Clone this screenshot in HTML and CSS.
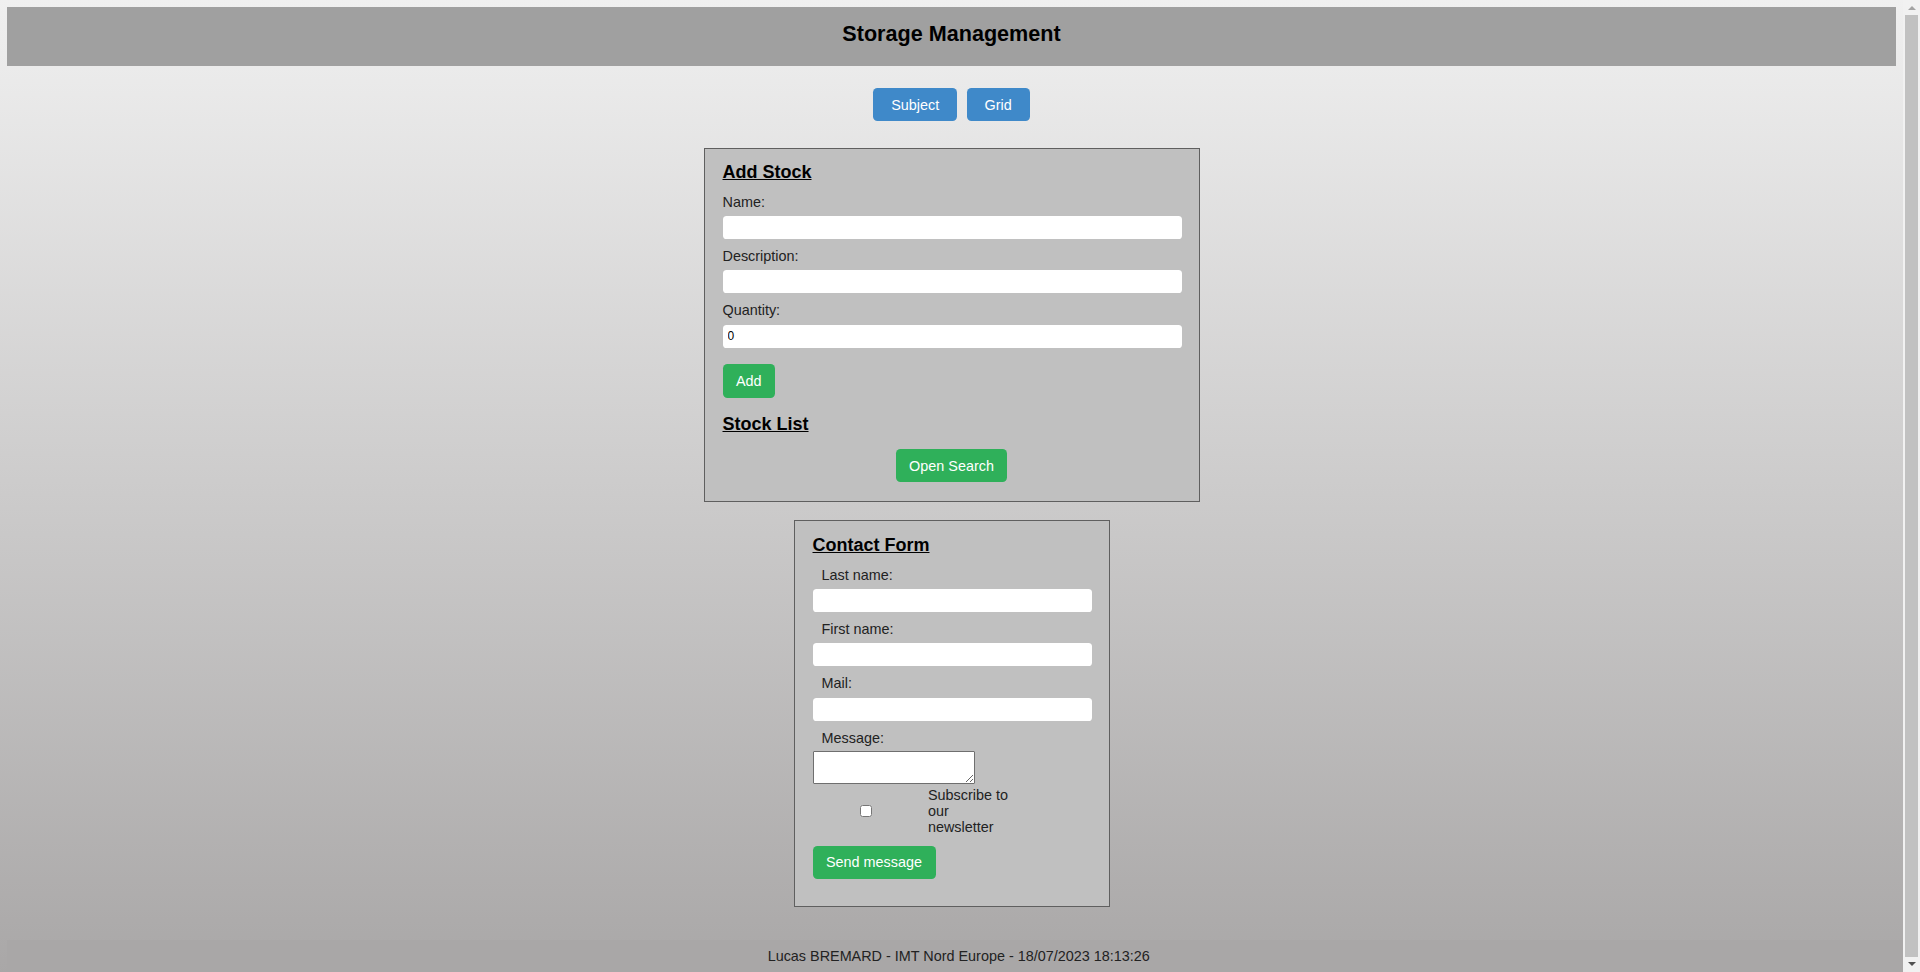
FILE: index.html
```html
<!DOCTYPE html>
<html lang="en">

<head>
    <meta charset="UTF-8">
    <meta name="viewport" content="width=device-width, initial-scale=1.0">
    <title>Storage Management</title>
    <link rel="stylesheet" href="styles.css">
</head>

<body>
    <header class="header">
        <h1>Storage Management</h1>
    </header>

    <nav class="nav">
        <button class="nav-btn">Subject</button>
        <button class="nav-btn">Grid</button>
    </nav>

    <section class="panel stock-panel">
        <h2 class="panel-title">Add Stock</h2>
        <div class="field">
            <label for="name">Name:</label>
            <input type="text" id="name">
        </div>
        <div class="field">
            <label for="description">Description:</label>
            <input type="text" id="description">
        </div>
        <div class="field">
            <label for="quantity">Quantity:</label>
            <input type="number" id="quantity" value="0">
        </div>
        <button class="btn btn-add">Add</button>

        <h2 class="panel-title list-title">Stock List</h2>
        <div class="search-row">
            <button class="btn">Open Search</button>
        </div>
    </section>

    <section class="panel contact-panel">
        <h2 class="panel-title">Contact Form</h2>
        <div class="field">
            <label for="lastname">Last name:</label>
            <input type="text" id="lastname">
        </div>
        <div class="field">
            <label for="firstname">First name:</label>
            <input type="text" id="firstname">
        </div>
        <div class="field">
            <label for="mail">Mail:</label>
            <input type="email" id="mail">
        </div>
        <div class="field message-field">
            <label for="message">Message:</label>
            <textarea id="message"></textarea>
        </div>
        <div class="newsletter">
            <div class="check-cell"><input type="checkbox" id="newsletter"></div>
            <label for="newsletter">Subscribe to our newsletter</label>
        </div>
        <button class="btn btn-send">Send message</button>
    </section>

    <footer class="footer">Lucas BREMARD - IMT Nord Europe - 18/07/2023 18:13:26</footer>

    <!-- window scrollbar as it shows in the screenshot -->
    <div class="scrollbar">
        <span class="arrow arrow-up"></span>
        <span class="thumb"></span>
        <span class="arrow arrow-down"></span>
    </div>
</body>

</html>
```

FILE: styles.css
```css
html {
    min-height: 100%;
    background: linear-gradient(to bottom, #f0f0f0 0%, #a8a6a6 100%);
}

body {
    margin: 0;
    padding: 7.2px 24.2px 81px 7.2px;
    font-family: 'Liberation Sans', Arial, sans-serif;
    font-size: 14.4px;
    color: #222;
}

.header {
    background: #a0a0a0;
    padding: 13.4px 0 19.6px;
    text-align: center;
}

.header h1 {
    margin: 0;
    font-size: 21.6px;
    font-weight: 700;
    color: #000;
}

.nav {
    display: flex;
    justify-content: center;
    gap: 9.3px;
    margin-top: 21.7px;
}

.nav-btn {
    font-family: inherit;
    font-size: 14.4px;
    padding: 8.7px 18px;
    border: none;
    border-radius: 4.5px;
    background: #3f89c9;
    color: #fff;
}

.panel {
    box-sizing: border-box;
    margin: 0 auto;
    background: #c0c0c0;
    border: 1px solid #5f5f5f;
    padding: 13.2px 18px 18.2px;
}

.stock-panel {
    width: 496px;
    margin-top: 27px;
}

.contact-panel {
    width: 316px;
    margin-top: 18.2px;
    padding-top: 14.6px;
    padding-bottom: 27px;
}

.panel-title {
    margin: 0;
    font-size: 18px;
    font-weight: 700;
    color: #000;
    text-decoration: underline;
}

.field {
    margin-top: 10.4px;
}

.field + .field {
    margin-top: 9px;
}

.field label {
    display: block;
    color: #222;
}

.contact-panel .field label {
    padding-left: 9px;
}

.field input {
    display: block;
    box-sizing: border-box;
    width: calc(100% + 1.4px);
    height: 23px;
    margin-top: 6.3px;
    padding: 0 5px;
    border: none;
    border-radius: 3.6px;
    background: #fff;
    font-family: 'Liberation Sans', Arial, sans-serif;
    font-size: 12px;
    color: #000;
}

.field input[type="number"]::-webkit-inner-spin-button {
    -webkit-appearance: none;
}

.message-field textarea {
    display: block;
    box-sizing: border-box;
    width: 162.4px;
    height: 33px;
    margin-top: 4.9px;
    border: 1px solid #6f6f6f;
    border-radius: 1px;
    background: #fff;
}

.btn {
    font-family: inherit;
    font-size: 14.4px;
    padding: 8.6px 13.5px;
    border: none;
    border-radius: 4.5px;
    background: #2fb05a;
    color: #fff;
}

.btn-add {
    margin-top: 16.7px;
}

.list-title {
    margin-top: 16px;
}

.search-row {
    display: flex;
    justify-content: center;
    margin-top: 14.6px;
}

.newsletter {
    display: flex;
    align-items: center;
    margin-top: 3.4px;
}

.check-cell {
    width: 107px;
    display: flex;
    justify-content: center;
}

.check-cell input {
    width: 11.7px;
    height: 11.7px;
    margin: 0;
}

.newsletter label {
    width: 85px;
    margin-left: 8.4px;
    color: #222;
}

.btn-send {
    margin-top: 10.7px;
}

.footer {
    position: fixed;
    left: 7.2px;
    bottom: 0;
    width: calc(100% - 17px);
    padding: 8.4px 0 7.8px;
    background: #a9a7a7;
    text-align: center;
    color: #222;
}

/* Scrollbar */
.scrollbar {
    position: fixed;
    top: 0;
    right: 0;
    bottom: 0;
    width: 17px;
    background: #f1f1f1;
    display: flex;
    flex-direction: column;
    align-items: center;
}

.thumb {
    flex: 1;
    width: 13px;
    margin: 5px 0;
    background: #c1c1c1;
}

.arrow {
    width: 0;
    height: 0;
    margin-top: 6px;
    border-left: 4px solid transparent;
    border-right: 4px solid transparent;
}

.arrow-up {
    border-bottom: 4px solid #a3a3a3;
}

.arrow-down {
    margin-top: 0;
    margin-bottom: 6px;
    border-top: 4px solid #505050;
}
```
